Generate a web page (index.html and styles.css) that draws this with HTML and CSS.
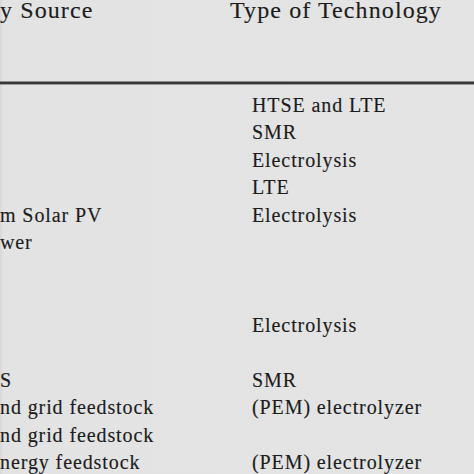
FILE: index.html
```html
<!DOCTYPE html>
<html>
<head>
<meta charset="utf-8">
<link rel="stylesheet" href="styles.css">
</head>
<body>
<div class="page">
  <div class="head">
    <div class="hcell">y Source</div>
    <div class="hcell">Type of Technology</div>
  </div>
  <div class="rule"></div>
  <div class="body">
    <div class="cell"></div><div class="cell">HTSE and LTE</div>
    <div class="cell"></div><div class="cell">SMR</div>
    <div class="cell"></div><div class="cell">Electrolysis</div>
    <div class="cell"></div><div class="cell">LTE</div>
    <div class="cell">m Solar PV</div><div class="cell">Electrolysis</div>
    <div class="cell">wer</div><div class="cell"></div>
    <div class="cell"></div><div class="cell"></div>
    <div class="cell"></div><div class="cell"></div>
    <div class="cell"></div><div class="cell">Electrolysis</div>
    <div class="cell"></div><div class="cell"></div>
    <div class="cell">S</div><div class="cell">SMR</div>
    <div class="cell">nd grid feedstock</div><div class="cell">(PEM) electrolyzer</div>
    <div class="cell">nd grid feedstock</div><div class="cell"></div>
    <div class="cell">nergy feedstock</div><div class="cell">(PEM) electrolyzer</div>
  </div>
</div>
</body>
</html>
```
FILE: styles.css
```css
html, body {
  margin: 0;
  padding: 0;
}
body {
  width: 474px;
  height: 474px;
  overflow: hidden;
  background: linear-gradient(to right, #d6d6d6 0, #e3e3e3 3px, #e4e4e4 100%);
  color: #1c1c1c;
  font-family: "Liberation Serif", "Times New Roman", serif;
}
.page {
  height: 474px;
  overflow: hidden;
}
.head {
  display: grid;
  grid-template-columns: 230px 1fr;
  align-items: start;
  height: 82px;
  font-size: 24px;
  line-height: 21px;
  letter-spacing: 1.1px;
  -webkit-text-stroke: 0.15px #1c1c1c;
}
.hcell {
  white-space: nowrap;
}
.rule {
  height: 2px;
  background: #383838;
  box-shadow: 0 -1px 0 #8a8a8a, 0 1px 0 #9a9a9a;
}
.body {
  display: grid;
  grid-template-columns: 252px 1fr;
  grid-auto-rows: 27.5px;
  padding-top: 7.5px;
  font-size: 20px;
  line-height: 27.5px;
  letter-spacing: 0.9px;
  -webkit-text-stroke: 0.15px #1c1c1c;
}
.cell {
  white-space: nowrap;
}
```
